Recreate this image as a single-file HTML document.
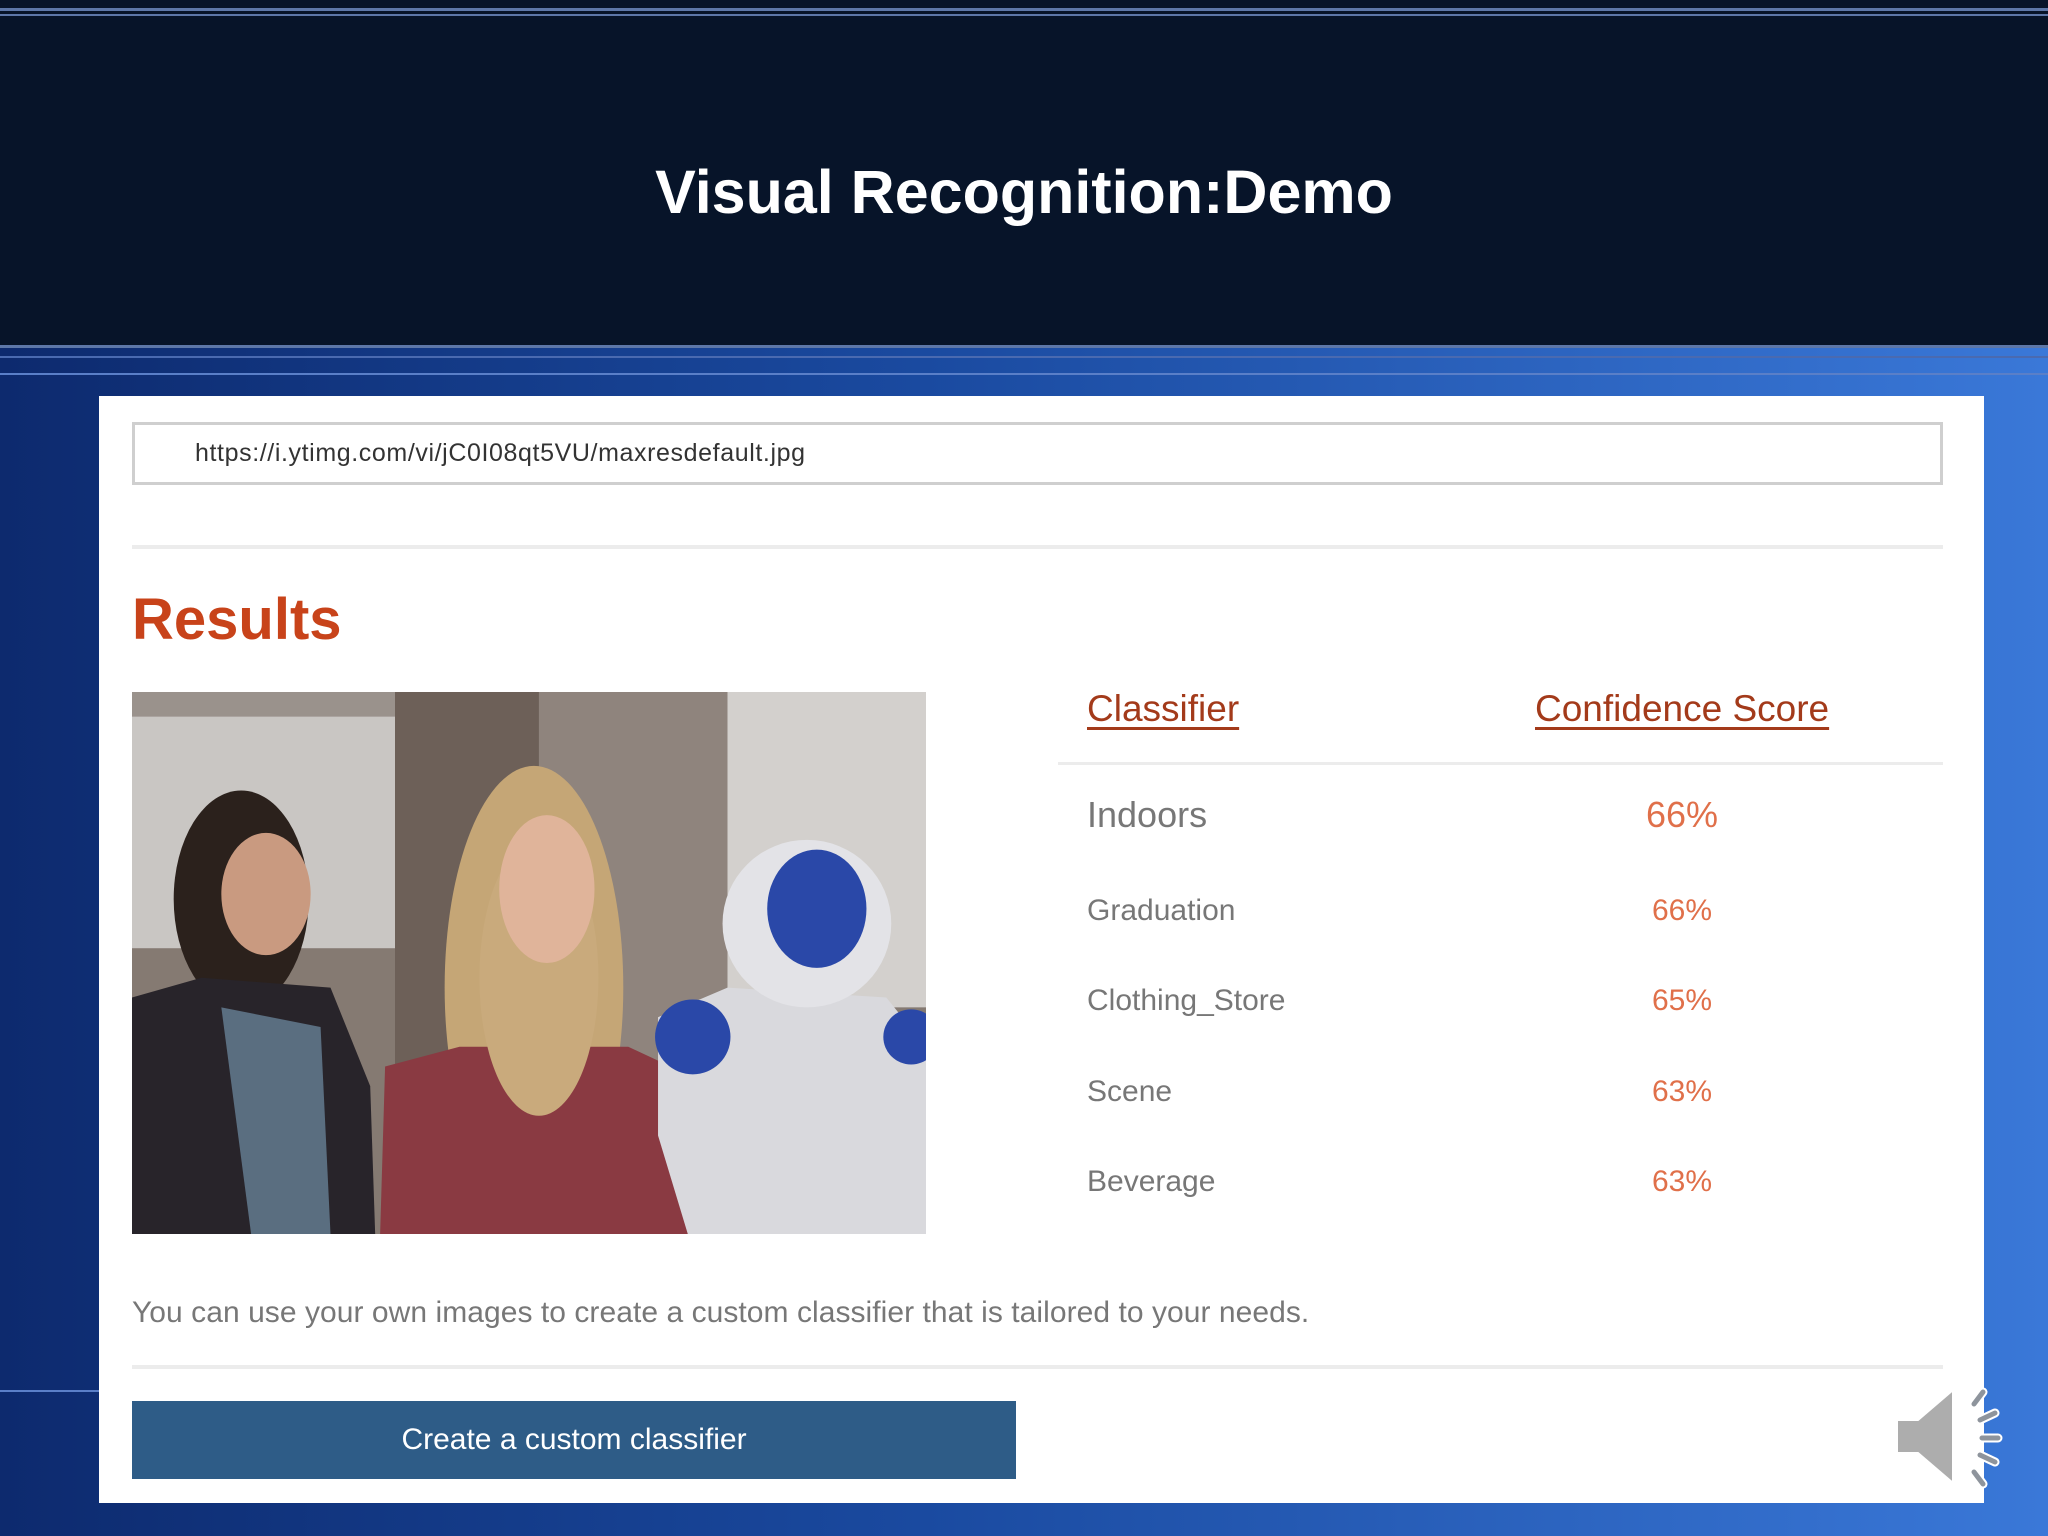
<!DOCTYPE html>
<html><head><meta charset="utf-8"><style>
*{margin:0;padding:0;box-sizing:border-box}
body{width:2048px;height:1536px;overflow:hidden;position:relative;font-family:"Liberation Sans",Arial,sans-serif;background:linear-gradient(90deg,#0d2a6e 0%,#1a4aa0 45%,#3a78d8 100%)}
.hdr{position:absolute;left:0;top:0;width:2048px;height:346px;background:#071429}
.l{position:absolute;left:0;width:2048px;height:3px;background:#5d77a8}
h1{position:absolute;left:0;width:2048px;top:152px;text-align:center;color:#fff;font-size:61px;font-weight:bold;line-height:80px}
.panel{position:absolute;left:99px;top:396px;width:1885px;height:1107px;background:#fff}
.abs{position:absolute}
.url{left:33px;top:26px;width:1811px;height:63px;border:3px solid #cfcfcf;font-size:25px;letter-spacing:0.6px;color:#333;padding-left:60px;line-height:57px}
.hr{height:4px;background:#ececec}
.res{left:33px;top:190px;font-size:58px;font-weight:bold;color:#c8431a}
.th{font-size:37px;color:#a33a1a;text-decoration:underline;text-underline-offset:6px}
.c{color:#777;font-size:30px}
.p{color:#e0704a;font-size:30px;text-align:center;width:200px}
.btn{left:33px;top:1005px;width:884px;height:78px;background:#2e5c87;color:#fff;font-size:30px;text-align:center;line-height:78px}
</style></head><body>
<div class="hdr"></div>
<div class="l" style="top:8px"></div><div class="l" style="top:14px;height:2px"></div>
<div class="l" style="top:345px"></div><div class="l" style="top:356px;height:2px;background:#4a6ab0"></div>
<div class="l" style="top:373px;height:2px;background:#5a7fc8"></div>
<div class="l" style="top:1390px;height:2px;background:#5a7fc8;width:110px"></div>
<h1>Visual Recognition:Demo</h1>
<div class="panel">
<div class="abs url">https://i.ytimg.com/vi/jC0I08qt5VU/maxresdefault.jpg</div>
<div class="abs hr" style="left:33px;top:149px;width:1811px"></div>
<div class="abs res">Results</div>
<svg class="abs" style="left:33px;top:296px" width="794" height="542" viewBox="0 0 800 550" preserveAspectRatio="none">
<rect width="800" height="550" fill="#857a72"/>
<rect x="0" y="20" width="265" height="240" fill="#c9c6c3"/>
<rect x="0" y="0" width="265" height="25" fill="#9a928c"/>
<rect x="265" y="0" width="145" height="550" fill="#6d6058"/>
<rect x="600" y="0" width="200" height="320" fill="#d3d0cd"/>
<rect x="410" y="0" width="190" height="550" fill="#8f847d"/>
<ellipse cx="110" cy="210" rx="68" ry="110" fill="#2b211c"/>
<ellipse cx="135" cy="205" rx="45" ry="62" fill="#c99a80"/>
<path d="M0 310 L70 290 L200 300 L240 400 L245 550 L0 550Z" fill="#28242a"/>
<path d="M90 320 L190 340 L200 550 L120 550Z" fill="#5a6e80"/>
<ellipse cx="405" cy="300" rx="90" ry="225" fill="#c5a676"/>
<path d="M255 380 L330 360 L500 360 L585 400 L585 550 L250 550Z" fill="#8a3a42"/>
<ellipse cx="410" cy="290" rx="60" ry="140" fill="#c9aa7c"/>
<ellipse cx="418" cy="200" rx="48" ry="75" fill="#e0b49a"/>
<path d="M530 330 L600 300 L760 310 L800 360 L800 550 L560 550 L530 450Z" fill="#d9d9dd"/>
<ellipse cx="680" cy="235" rx="85" ry="85" fill="#e3e3e7"/>
<ellipse cx="690" cy="220" rx="50" ry="60" fill="#2a48a8"/>
<circle cx="565" cy="350" r="38" fill="#2a48a8"/>
<circle cx="785" cy="350" r="28" fill="#2a48a8"/>
</svg>
<div class="abs th" style="left:988px;top:292px">Classifier</div>
<div class="abs th" style="left:1436px;top:292px">Confidence Score</div>
<div class="abs hr" style="left:959px;top:366px;width:885px;height:3px"></div>
<div class="abs c" style="left:988px;top:398px;font-size:36px">Indoors</div>
<div class="abs p" style="left:1483px;top:398px;font-size:36px">66%</div>
<div class="abs c" style="left:988px;top:498px">Graduation</div><div class="abs p" style="left:1483px;top:498px">66%</div>
<div class="abs c" style="left:988px;top:588px">Clothing_Store</div><div class="abs p" style="left:1483px;top:588px">65%</div>
<div class="abs c" style="left:988px;top:679px">Scene</div><div class="abs p" style="left:1483px;top:679px">63%</div>
<div class="abs c" style="left:988px;top:769px">Beverage</div><div class="abs p" style="left:1483px;top:769px">63%</div>
<div class="abs" style="left:33px;top:900px;font-size:30px;letter-spacing:0.05px;color:#777">You can use your own images to create a custom classifier that is tailored to your needs.</div>
<div class="abs hr" style="left:33px;top:969px;width:1811px"></div>
<div class="abs btn">Create a custom classifier</div>
</div>
<svg class="abs" style="left:1890px;top:1380px" width="130" height="120" viewBox="0 0 130 120">
<path d="M7 40 H28 L63 10 V103 L28 73 H7Z" fill="#adadad" stroke="#fff" stroke-width="2"/>
<g stroke="#fff" stroke-width="9" stroke-linecap="round"><path d="M84 24 L93 12M90 40 L105 33M92 58 H108M90 75 L105 82M84 92 L93 104"/></g>
<g stroke="#8e949c" stroke-width="5" stroke-linecap="round"><path d="M84 24 L93 12M90 40 L105 33M92 58 H108M90 75 L105 82M84 92 L93 104"/></g>
</svg>
</body></html>
